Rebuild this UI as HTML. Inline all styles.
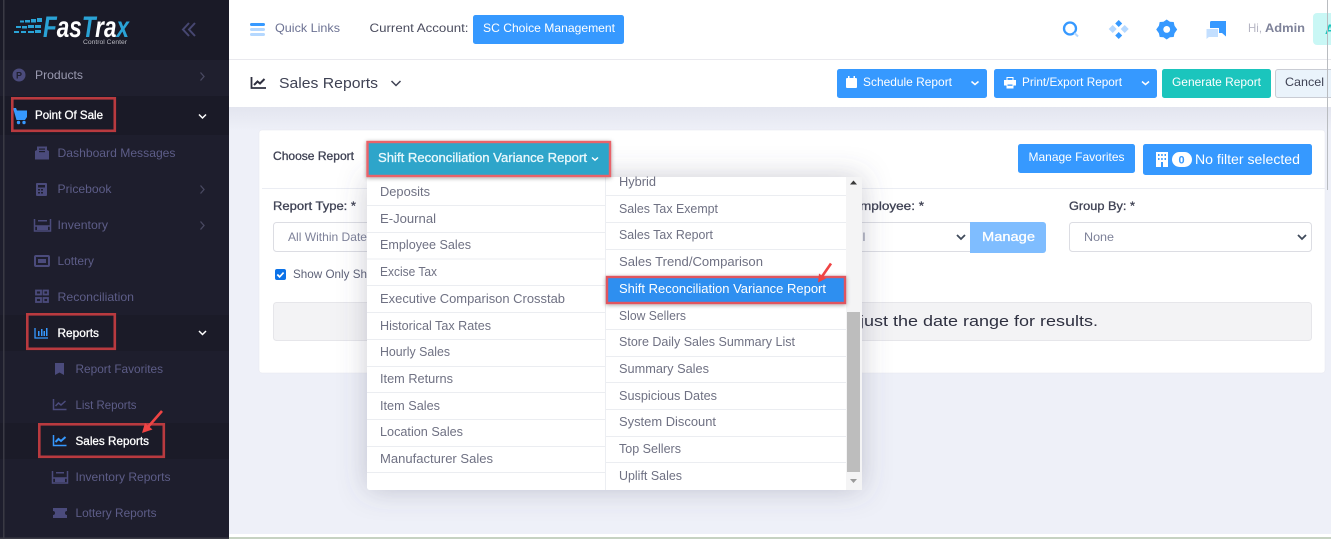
<!DOCTYPE html>
<html><head><meta charset="utf-8"><style>
html,body{margin:0;padding:0;width:1331px;height:539px;overflow:hidden;background:#eef0f8}
svg{display:block}
text{font-family:"Liberation Sans",sans-serif}
.s{font-size:12px;fill:#5d5d88}
.p{font-size:12px;fill:#9a9ab0}
.w{font-size:12px;fill:#fff;stroke:#fff;stroke-width:.3}
.d{font-size:12.5px;fill:#6f7183}
.b{font-size:12px;fill:#fff}
.l{font-size:12px;fill:#3f4254;stroke:#3f4254;stroke-width:.3}
.ic{fill:#4b4b7c}
</style></head><body>
<svg width="1331" height="539" viewBox="0 0 1331 539" xmlns="http://www.w3.org/2000/svg">
<defs>
<filter id="sh" x="-15%" y="-20%" width="130%" height="140%"><feDropShadow dx="0" dy="0" stdDeviation="14" flood-color="#52526e" flood-opacity=".3"/></filter>
<filter id="sb" x="-10%" y="-40%" width="120%" height="180%"><feDropShadow dx="0" dy="1" stdDeviation="2" flood-color="#000" flood-opacity=".35"/></filter>
<linearGradient id="hd" x1="0" y1="0" x2="0" y2="1"><stop offset="0" stop-color="#e3e5ef"/><stop offset="1" stop-color="#eef0f8"/></linearGradient>
</defs>

<!-- main background -->
<rect x="229" y="0" width="1102" height="539" fill="#eef0f8"/>
<rect x="229" y="107" width="1102" height="24" fill="url(#hd)"/>
<rect x="229" y="534" width="1102" height="3" fill="#fff"/>
<rect x="229" y="537" width="1102" height="2" fill="#c6d2c2"/>

<!-- top bar -->
<rect x="229" y="0" width="1102" height="59" fill="#fff"/>
<rect x="229" y="59" width="1102" height="1" fill="#e9e9ee"/>
<rect x="229" y="60" width="1102" height="47" fill="#fff"/>

<rect x="250" y="23" width="15" height="3" rx="1.5" fill="#3699ff"/>
<rect x="250" y="28" width="15" height="3" rx="1.5" fill="#b5d8ff"/>
<rect x="250" y="33" width="15" height="3" rx="1.5" fill="#b5d8ff"/>
<text x="275" y="32" font-size="12" fill="#6c7293" textLength="65" lengthAdjust="spacingAndGlyphs">Quick Links</text>
<text x="369.500" y="32" font-size="12" fill="#4a4c5e" textLength="99" lengthAdjust="spacingAndGlyphs">Current Account:</text>
<rect x="473" y="15" width="151" height="29" rx="2.500" fill="#3699ff"/>
<text x="483" y="32" class="b" textLength="132" lengthAdjust="spacingAndGlyphs">SC Choice Management</text>

<!-- top icons -->
<circle cx="1070" cy="28.500" r="6" fill="none" stroke="#3699ff" stroke-width="2.300"/>
<path d="M1074.500 33l3.500 3.500" stroke="#b5d8ff" stroke-width="2"/>
<path d="M1118.700 20l3.500 3.500-3.500 3.500-3.500-3.500zM1118.700 32l3.500 3.500-3.500 3.500-3.500-3.500z" fill="#3699ff"/>
<path d="M1112.700 25l4 4-4 4-4-4zM1124.700 25l4 4-4 4-4-4z" fill="#b5d8ff"/>
<path fill-rule="evenodd" d="M1166.700 19.500l3.200 2.300 3.800.2.800 3.700 2.700 3.800-2.700 3.800-.8 3.700-3.800.2-3.200 2.300-3.200-2.300-3.800-.2-.8-3.700-2.700-3.800 2.700-3.800.8-3.700 3.800-.2zM1166.700 26a3.400 3.400 0 1 0 .01 0z" fill="#3699ff"/>
<path d="M1210 22.500a1.500 1.500 0 0 1 1.500-1.500h14.500v15.500l-4-3.500h-12z" fill="#3699ff"/>
<path d="M1206 28.500h12.500v9h-9.500l-3 2.500z" fill="#c3dfff" stroke="#fff" stroke-width="1"/>
<text x="1248" y="32" font-size="12" fill="#b5b5c3" textLength="14" lengthAdjust="spacingAndGlyphs">Hi,</text>
<text x="1265" y="32" font-size="12" font-weight="bold" fill="#7e8299" textLength="40" lengthAdjust="spacingAndGlyphs">Admin</text>
<rect x="1313" y="13" width="30" height="32" rx="4" fill="#c9f7f5"/>
<text x="1325" y="34" font-size="14" font-weight="bold" fill="#1bc5bd">A</text>

<!-- subheader -->
<path d="M251.500 77v11h14.500" fill="none" stroke="#2f3040" stroke-width="1.800"/>
<path d="M254 85l3.500-3.500 2.500 2 4.500-4.500" fill="none" stroke="#2f3040" stroke-width="2"/>
<text x="279" y="88" font-size="15" fill="#3f4254" textLength="99" lengthAdjust="spacingAndGlyphs">Sales Reports</text>
<path d="M391.500 81l4.500 4.500 4.500-4.500" fill="none" stroke="#3f4254" stroke-width="1.500"/>

<rect x="837" y="69" width="150" height="29" rx="2.500" fill="#3699ff"/>
<rect x="846" y="78" width="11" height="10" rx="1" fill="#fff"/><rect x="848" y="76" width="1.500" height="3" fill="#fff"/><rect x="853.500" y="76" width="1.500" height="3" fill="#fff"/>
<text x="863" y="86" class="b" textLength="89" lengthAdjust="spacingAndGlyphs">Schedule Report</text>
<path d="M971.500 81.500l3.500 3 3.500-3" fill="none" stroke="#fff" stroke-width="1.500"/>
<rect x="994" y="69" width="163" height="29" rx="2.500" fill="#3699ff"/>
<path d="M1006.500 77h7v3h2.500v5.500h-2.500v3h-7v-3h-2.500v-5.500h2.500z" fill="#fff"/><rect x="1007.500" y="84.500" width="5" height="1.300" fill="#3699ff"/><rect x="1007.500" y="78" width="5" height="2" fill="#3699ff"/>
<text x="1022" y="86" class="b" textLength="100" lengthAdjust="spacingAndGlyphs">Print/Export Report</text>
<path d="M1142 81.500l3.500 3 3.500-3" fill="none" stroke="#fff" stroke-width="1.500"/>
<rect x="1162" y="69" width="109" height="29" rx="2.500" fill="#1bc5bd"/>
<text x="1172" y="86" class="b" textLength="89" lengthAdjust="spacingAndGlyphs">Generate Report</text>
<rect x="1275.500" y="69.500" width="60" height="28" rx="2.500" fill="#eaf3fb" stroke="#c9ccd4"/>
<text x="1285" y="86" font-size="12" fill="#3f4254" textLength="39" lengthAdjust="spacingAndGlyphs">Cancel</text>

<!-- card -->
<rect x="259" y="130" width="1066" height="243" rx="3" fill="#fff" stroke="#e6e7ef" stroke-width=".5"/>
<rect x="262" y="188" width="1063" height="1" fill="#ebedf3"/>
<text x="273" y="160" class="l" font-size="11" textLength="81" lengthAdjust="spacingAndGlyphs">Choose Report</text>

<rect x="1018" y="144" width="117" height="29" rx="2.500" fill="#3699ff"/>
<text x="1028.500" y="161" class="b" textLength="96" lengthAdjust="spacingAndGlyphs">Manage Favorites</text>
<rect x="1143" y="144" width="169" height="31" rx="2.500" fill="#3699ff"/>
<path d="M1156 152h12v15h-12z" fill="#fff"/>
<g fill="#3699ff"><rect x="1158" y="154" width="1.500" height="2"/><rect x="1161.200" y="154" width="1.500" height="2"/><rect x="1164.500" y="154" width="1.500" height="2"/><rect x="1158" y="158" width="1.500" height="2"/><rect x="1161.200" y="158" width="1.500" height="2"/><rect x="1164.500" y="158" width="1.500" height="2"/><rect x="1161" y="162" width="2" height="5"/></g>
<rect x="1172" y="152" width="20" height="15" rx="7.500" fill="#fff"/>
<text x="1178.500" y="163.500" font-size="11" font-weight="bold" fill="#3699ff">0</text>
<text x="1195" y="164" font-size="14" fill="#fff" textLength="105" lengthAdjust="spacingAndGlyphs">No filter selected</text>

<text x="273" y="210" class="l" textLength="83" lengthAdjust="spacingAndGlyphs">Report Type: *</text>
<rect x="273.500" y="222.500" width="120" height="29" rx="3" fill="#fff" stroke="#dcdde3"/>
<text x="288" y="241" font-size="12" fill="#7e8299" textLength="79" lengthAdjust="spacingAndGlyphs">All Within Date</text>
<rect x="275" y="269" width="11" height="11" rx="2" fill="#0b72e8"/>
<path d="M277.300 274.500l2.300 2.400 4-4.300" fill="none" stroke="#fff" stroke-width="1.700"/>
<text x="293" y="278" font-size="12" fill="#5e6278" textLength="74" lengthAdjust="spacingAndGlyphs">Show Only Sh</text>

<text x="860" y="210" class="l" textLength="64" lengthAdjust="spacingAndGlyphs">mployee: *</text>
<rect x="840.500" y="222.500" width="130" height="29" fill="#fff" stroke="#dcdde3"/>
<text x="860" y="241" font-size="12" fill="#7e8299">ll</text>
<path d="M957 235l4 4 4-4" fill="none" stroke="#3f4a5a" stroke-width="1.800"/>
<path d="M970 222h73a3 3 0 0 1 3 3v25a3 3 0 0 1-3 3h-73z" fill="#7fbdff"/>
<text x="982" y="241" font-size="13" fill="#fff" stroke="#fff" stroke-width=".3" textLength="53" lengthAdjust="spacingAndGlyphs">Manage</text>
<text x="1069" y="210" class="l" textLength="66" lengthAdjust="spacingAndGlyphs">Group By: *</text>
<rect x="1069.500" y="222.500" width="242" height="29" rx="3" fill="#fff" stroke="#dcdde3"/>
<text x="1084" y="241" font-size="12" fill="#7e8299" textLength="30" lengthAdjust="spacingAndGlyphs">None</text>
<path d="M1298 235l4 4 4-4" fill="none" stroke="#3f4a5a" stroke-width="1.800"/>

<rect x="273.500" y="302.500" width="1038" height="38" rx="3" fill="#f3f3f5" stroke="#e6e6ea"/>
<text x="860" y="326" font-size="15" fill="#2e3040" textLength="238" lengthAdjust="spacingAndGlyphs">just the date range for results.</text>

<!-- dropdown -->
<rect x="367" y="177" width="495" height="313" rx="3" fill="#fff" filter="url(#sh)"/>
<rect x="367" y="177" width="495" height="313" rx="3" fill="#fff"/>
<rect x="605" y="177" width="1" height="313" fill="#eceef2"/>
<rect x="846" y="177" width="16" height="313" fill="#f4f4f5"/>
<rect x="847" y="312" width="13" height="160" fill="#bdbdbd"/>
<path d="M853.500 180.500l3.500 4h-7z" fill="#3a3a3a"/>
<path d="M853.500 483l-3.500-4h7z" fill="#9a9a9a"/>
<g fill="#ebedf1">
<rect x="367" y="205" width="238" height="1"/><rect x="367" y="232" width="238" height="1"/><rect x="367" y="258.500" width="238" height="1"/><rect x="367" y="285" width="238" height="1"/><rect x="367" y="312" width="238" height="1"/><rect x="367" y="339" width="238" height="1"/><rect x="367" y="366" width="238" height="1"/><rect x="367" y="392" width="238" height="1"/><rect x="367" y="419" width="238" height="1"/><rect x="367" y="446" width="238" height="1"/><rect x="367" y="472" width="238" height="1"/>
<rect x="606" y="195" width="240" height="1"/><rect x="606" y="222" width="240" height="1"/><rect x="606" y="249" width="240" height="1"/><rect x="606" y="329" width="240" height="1"/><rect x="606" y="356" width="240" height="1"/><rect x="606" y="382" width="240" height="1"/><rect x="606" y="409" width="240" height="1"/><rect x="606" y="436" width="240" height="1"/><rect x="606" y="462" width="240" height="1"/>
</g>
<g class="d">
<text class="d" x="380" y="196" textLength="50" lengthAdjust="spacingAndGlyphs">Deposits</text>
<text class="d" x="380" y="223" textLength="56" lengthAdjust="spacingAndGlyphs">E-Journal</text>
<text class="d" x="380" y="249" textLength="91" lengthAdjust="spacingAndGlyphs">Employee Sales</text>
<text class="d" x="380" y="276" textLength="57" lengthAdjust="spacingAndGlyphs">Excise Tax</text>
<text class="d" x="380" y="303" textLength="185" lengthAdjust="spacingAndGlyphs">Executive Comparison Crosstab</text>
<text class="d" x="380" y="330" textLength="111" lengthAdjust="spacingAndGlyphs">Historical Tax Rates</text>
<text class="d" x="380" y="356" textLength="70" lengthAdjust="spacingAndGlyphs">Hourly Sales</text>
<text class="d" x="380" y="383" textLength="73" lengthAdjust="spacingAndGlyphs">Item Returns</text>
<text class="d" x="380" y="410" textLength="60" lengthAdjust="spacingAndGlyphs">Item Sales</text>
<text class="d" x="380" y="436" textLength="83" lengthAdjust="spacingAndGlyphs">Location Sales</text>
<text class="d" x="380" y="463" textLength="113" lengthAdjust="spacingAndGlyphs">Manufacturer Sales</text>
<text class="d" x="619" y="186" textLength="37" lengthAdjust="spacingAndGlyphs">Hybrid</text>
<text class="d" x="619" y="213" textLength="99" lengthAdjust="spacingAndGlyphs">Sales Tax Exempt</text>
<text class="d" x="619" y="239" textLength="94" lengthAdjust="spacingAndGlyphs">Sales Tax Report</text>
<text class="d" x="619" y="266" textLength="144" lengthAdjust="spacingAndGlyphs">Sales Trend/Comparison</text>
<text class="d" x="619" y="320" textLength="67" lengthAdjust="spacingAndGlyphs">Slow Sellers</text>
<text class="d" x="619" y="346" textLength="176" lengthAdjust="spacingAndGlyphs">Store Daily Sales Summary List</text>
<text class="d" x="619" y="373" textLength="90" lengthAdjust="spacingAndGlyphs">Summary Sales</text>
<text class="d" x="619" y="400" textLength="98" lengthAdjust="spacingAndGlyphs">Suspicious Dates</text>
<text class="d" x="619" y="426" textLength="97" lengthAdjust="spacingAndGlyphs">System Discount</text>
<text class="d" x="619" y="453" textLength="62" lengthAdjust="spacingAndGlyphs">Top Sellers</text>
<text class="d" x="619" y="480" textLength="63" lengthAdjust="spacingAndGlyphs">Uplift Sales</text>
</g>

<!-- highlighted option -->
<rect x="607" y="277" width="238" height="26" fill="#2f8ff0" stroke="#e0545f" stroke-width="2.400" filter="url(#sb)"/>
<text x="619" y="293" font-size="12.500" fill="#fff" textLength="207" lengthAdjust="spacingAndGlyphs">Shift Reconciliation Variance Report</text>
<path d="M831 263.500l-9 13" stroke="#ef4444" stroke-width="2.600"/>
<path d="M818 282.500l1-9 7 5z" fill="#ef4444"/>

<!-- choose report button -->
<rect x="367.500" y="142" width="242.500" height="34" fill="#2fa5ca" stroke="#e9636a" stroke-width="2.400" filter="url(#sb)"/>
<text x="378" y="162" font-size="12.500" fill="#e9f8fc" stroke="#e9f8fc" stroke-width=".3" textLength="209" lengthAdjust="spacingAndGlyphs">Shift Reconciliation Variance Report</text>
<path d="M592 157.500l3 2.700 3-2.700" fill="none" stroke="#fff" stroke-width="1.400"/>

<!-- sidebar -->
<rect x="0" y="0" width="229" height="539" fill="#1e1e2d"/>
<rect x="0" y="0" width="229" height="60" fill="#1a1a27"/>
<rect x="0" y="60" width="229" height="36" fill="#1f1f2e"/>
<rect x="0" y="96" width="229" height="39" fill="#1a1a27"/>
<rect x="0" y="315" width="229" height="36" fill="#1b1b28"/>
<rect x="0" y="423" width="229" height="36" fill="#1b1b28"/>
<rect x="3" y="0" width="1.500" height="539" fill="#3a3a44"/>
<rect x="0" y="537.500" width="229" height="1.500" fill="#3a3a44"/>

<!-- logo -->
<g fill="#2aa3d6">
<rect x="14" y="31" width="5" height="2"/><rect x="21" y="31" width="5" height="2"/><rect x="28" y="31" width="6" height="2"/><rect x="35" y="30" width="6" height="3"/>
<rect x="16" y="26" width="5" height="2"/><rect x="22" y="26" width="5" height="2.500"/><rect x="28" y="25" width="6" height="3"/><rect x="35" y="25" width="6" height="3"/>
<rect x="20" y="20.500" width="4" height="2"/><rect x="25" y="20" width="5" height="2.500"/><rect x="31" y="19" width="5" height="3.500"/><rect x="37" y="18" width="5" height="4"/>
</g>
<text x="43" y="37" font-size="30" font-weight="bold" font-style="italic" textLength="86" lengthAdjust="spacingAndGlyphs"><tspan fill="#2aa3d6">F</tspan><tspan fill="#fff">as</tspan><tspan fill="#2aa3d6">T</tspan><tspan fill="#fff">ra</tspan><tspan fill="#2aa3d6">x</tspan></text>
<text x="83" y="44" font-size="6" fill="#b8b8c0" textLength="44" lengthAdjust="spacingAndGlyphs">Control Center</text>
<path d="M189 23l-6 6.500 6 6.500M195 23l-6 6.500 6 6.500" fill="none" stroke="#474771" stroke-width="2"/>

<!-- sidebar icons -->
<circle cx="19" cy="75" r="6.500" fill="#4b4b7c"/>
<text x="16" y="78.500" font-size="9" font-weight="bold" fill="#1f1f2e">P</text>
<path d="M13 108h3l1 2.500h10v6.500l-2 3h-8.500z" fill="#3699ff"/><circle cx="18.500" cy="122.500" r="1.700" fill="#3699ff"/><circle cx="24" cy="122.500" r="1.700" fill="#3699ff"/>
<path d="M35 151l2-1v-3.500h10v3.500l2 1v8.500h-14z" class="ic"/><rect x="39" y="148.500" width="6" height="1.200" fill="#1e1e2d"/><rect x="39" y="151" width="6" height="1.200" fill="#1e1e2d"/>
<rect x="36" y="183" width="11" height="13" rx="1" class="ic"/><rect x="38" y="185" width="7" height="2.500" fill="#1e1e2d"/><g fill="#1e1e2d"><rect x="38" y="189" width="2" height="1.500"/><rect x="41" y="189" width="2" height="1.500"/><rect x="38" y="192" width="2" height="1.500"/><rect x="41" y="192" width="2" height="1.500"/></g>
<path d="M34.500 219v12h16v-12M34.500 226h16" fill="none" stroke="#4b4b7c" stroke-width="1.500"/><rect x="37" y="226" width="11" height="4" class="ic"/><rect x="38" y="220" width="9" height="1.500" class="ic"/>
<rect x="35" y="256" width="14" height="10" rx="1" fill="none" stroke="#4b4b7c" stroke-width="2"/><rect x="38" y="259" width="8" height="4" class="ic"/>
<g fill="none" stroke="#4b4b7c" stroke-width="1.800"><rect x="36" y="290.500" width="5" height="4"/><rect x="43.500" y="290.500" width="4.500" height="4"/><rect x="36" y="298" width="5" height="4"/><rect x="43.500" y="298" width="4.500" height="4"/></g>
<path d="M35 328v10h13" fill="none" stroke="#3699ff" stroke-width="1.300"/><g fill="#3699ff"><rect x="38" y="331" width="1.500" height="5"/><rect x="41" y="329" width="1.500" height="7"/><rect x="43.500" y="331" width="1.500" height="5"/><rect x="46" y="328" width="1.500" height="8"/></g>
<path d="M55 363h9v12l-4.500-2.500-4.500 2.500z" class="ic"/>
<path d="M53.500 399v10.500h13" fill="none" stroke="#4b4b7c" stroke-width="1.500"/><path d="M55.500 406l3-3 2.500 2 4.500-4" fill="none" stroke="#4b4b7c" stroke-width="1.500"/>
<path d="M53.500 435v10.500h13" fill="none" stroke="#3699ff" stroke-width="1.500"/><path d="M55.500 442l3-3 2.500 2 4.500-4" fill="none" stroke="#3699ff" stroke-width="2"/>
<path d="M52.500 471v12h15v-12M52.500 478h15" fill="none" stroke="#4b4b7c" stroke-width="1.500"/><rect x="55" y="478" width="10" height="4" class="ic"/><rect x="56" y="472" width="8" height="1.500" class="ic"/>
<path d="M53 508h14v3a2 2 0 0 0 0 4v3h-14v-3a2 2 0 0 0 0-4z" fill="#4b4b7c"/>

<!-- sidebar text -->
<text class="p" x="35" y="79" textLength="48" lengthAdjust="spacingAndGlyphs">Products</text>
<text class="w" x="35" y="119" textLength="68" lengthAdjust="spacingAndGlyphs">Point Of Sale</text>
<text class="s" x="57.500" y="157" textLength="118" lengthAdjust="spacingAndGlyphs">Dashboard Messages</text>
<text class="s" x="57.500" y="193" textLength="54" lengthAdjust="spacingAndGlyphs">Pricebook</text>
<text class="s" x="57.500" y="229" textLength="50.500" lengthAdjust="spacingAndGlyphs">Inventory</text>
<text class="s" x="57.500" y="265" textLength="36.500" lengthAdjust="spacingAndGlyphs">Lottery</text>
<text class="s" x="57.500" y="301" textLength="76.500" lengthAdjust="spacingAndGlyphs">Reconciliation</text>
<text class="w" x="57.500" y="337" textLength="41.500" lengthAdjust="spacingAndGlyphs">Reports</text>
<text class="s" x="75.500" y="373" textLength="87.500" lengthAdjust="spacingAndGlyphs">Report Favorites</text>
<text class="s" x="75.500" y="409" textLength="61" lengthAdjust="spacingAndGlyphs">List Reports</text>
<text class="w" x="75.500" y="445" textLength="73.500" lengthAdjust="spacingAndGlyphs">Sales Reports</text>
<text class="s" x="75.500" y="481" textLength="95" lengthAdjust="spacingAndGlyphs">Inventory Reports</text>
<text class="s" x="75.500" y="517" textLength="81" lengthAdjust="spacingAndGlyphs">Lottery Reports</text>

<!-- chevrons -->
<g fill="none" stroke="#494961" stroke-width="1.300"><path d="M200.500 72.500l3.500 4-3.500 4"/><path d="M200.500 185.500l3.500 4-3.500 4"/><path d="M200.500 221.500l3.500 4-3.500 4"/></g>
<g fill="none" stroke="#fff" stroke-width="1.500"><path d="M199 114.500l3.500 3.500 3.500-3.500"/><path d="M199 331l3.500 3.500 3.500-3.500"/></g>

<!-- annotation boxes -->
<g fill="none" stroke="#b93a3f" stroke-width="2.600">
<rect x="12.300" y="98.300" width="102.500" height="32.500"/>
<rect x="27.300" y="314.300" width="87.500" height="34.500"/>
<rect x="39.300" y="424.300" width="124.500" height="32.500"/>
</g>
<path d="M162 411l-14 16" stroke="#ef4444" stroke-width="2.600"/>
<path d="M142 433l3-10 7.500 6.500z" fill="#ef4444"/>

<!-- window edge -->
<rect x="1327" y="0" width="1" height="190" fill="#b9bcc0"/>
</svg>
</body></html>
